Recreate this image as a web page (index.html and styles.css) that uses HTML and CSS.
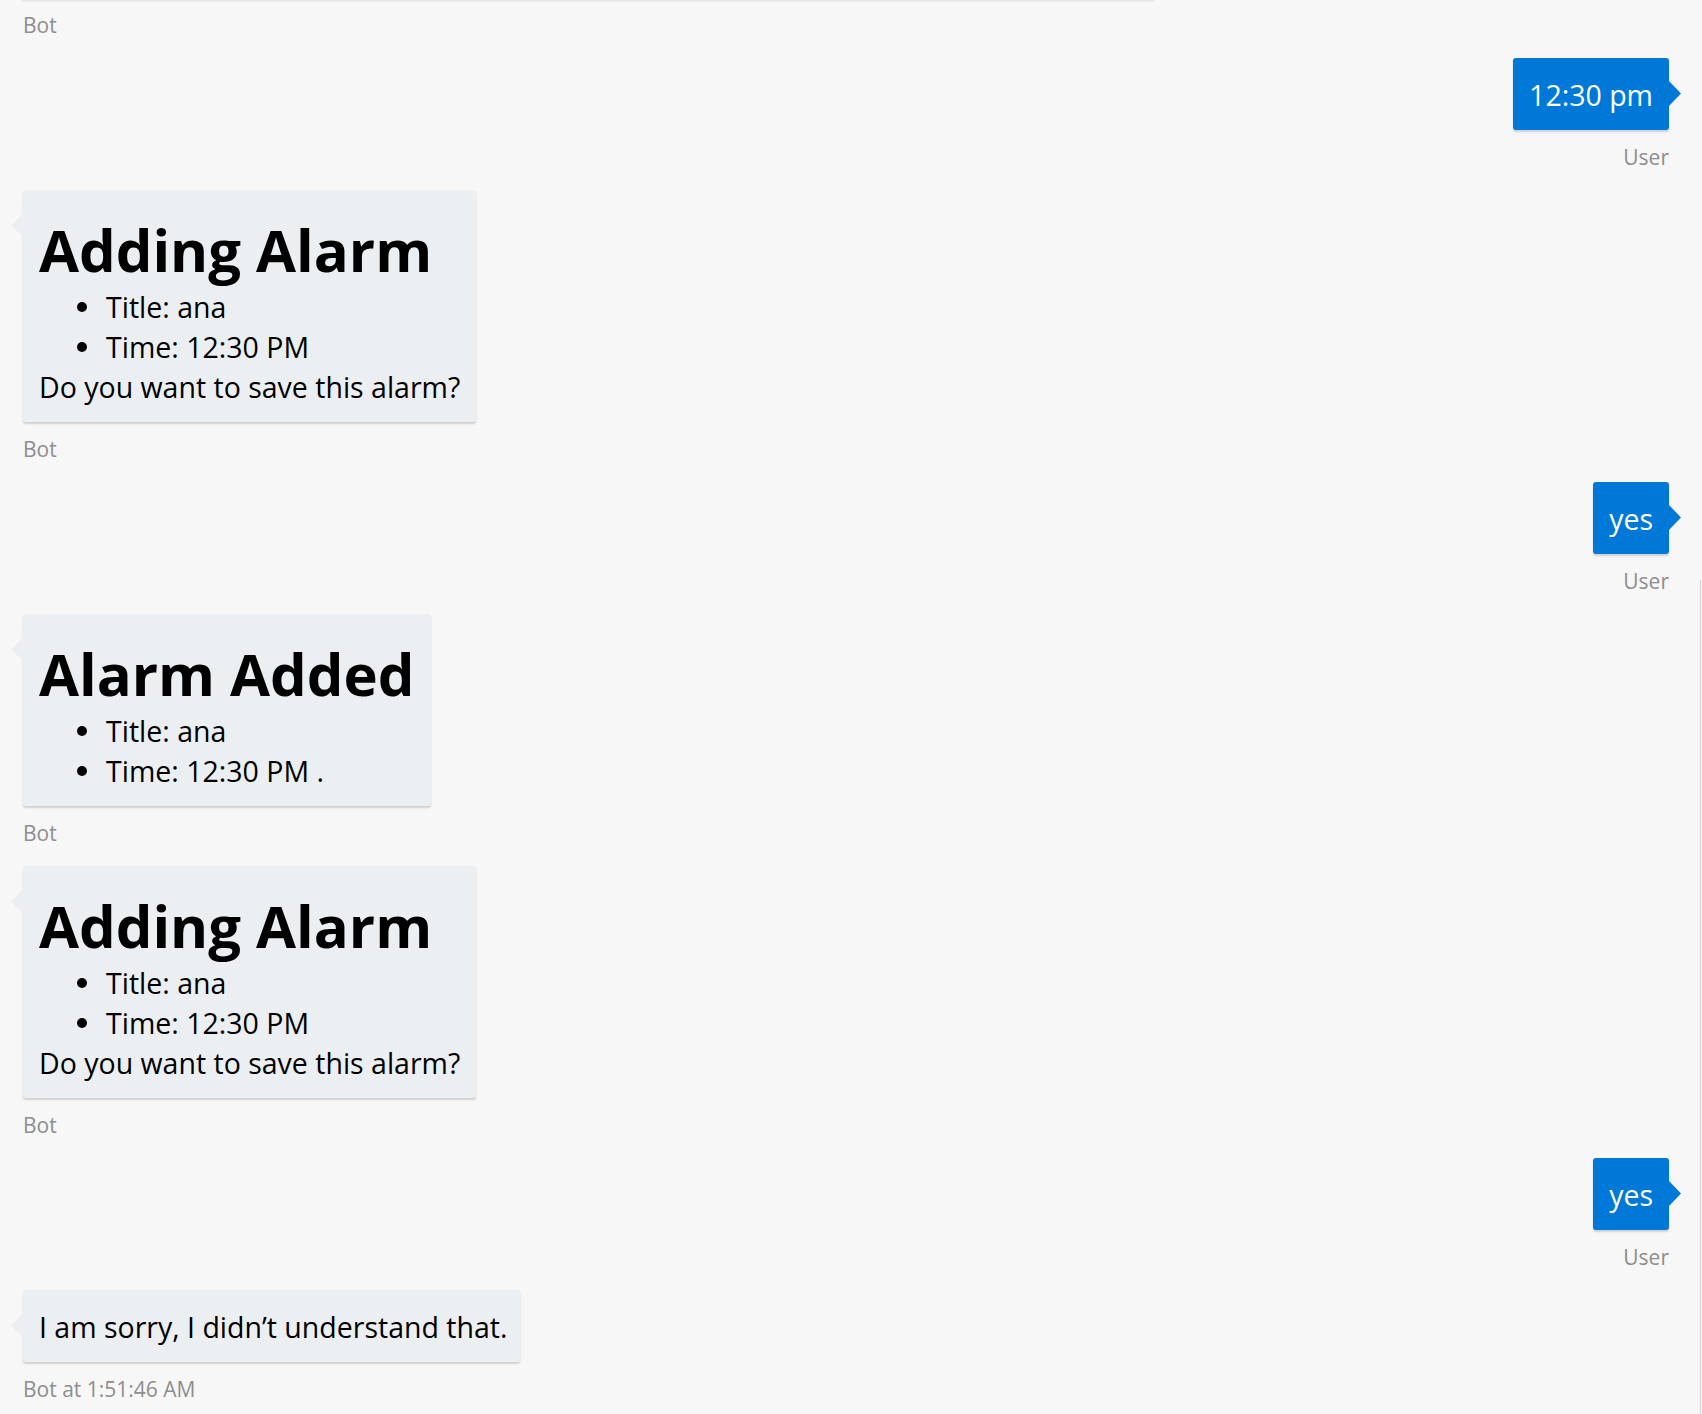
FILE: index.html
```html
<!DOCTYPE html>
<html lang="en">
<head>
<meta charset="utf-8">
<title>Chat</title>
<link rel="stylesheet" href="styles.css">
</head>
<body>
<div class="chat">
  <div class="prev-edge"></div>
  <div class="label first">Bot</div>

  <div class="msg me">
    <div class="bubble user">12:30 pm
      <svg class="callout right" width="12" height="25" viewBox="0 0 12 25"><polygon points="0,0 12,12.5 0,25" fill="#0078d7"/></svg>
    </div>
    <div class="label">User</div>
  </div>

  <div class="msg">
    <div class="bubble bot card">
      <svg class="callout left" width="12" height="24" viewBox="0 0 12 24"><polygon points="12,0 0,12.5 12,24" fill="#eceff1"/></svg>
      <h1>Adding Alarm</h1>
      <ul>
        <li>Title: ana</li>
        <li>Time: 12:30 PM</li>
      </ul>
      <p>Do you want to save this alarm?</p>
    </div>
    <div class="label">Bot</div>
  </div>

  <div class="msg me">
    <div class="bubble user">yes
      <svg class="callout right" width="12" height="25" viewBox="0 0 12 25"><polygon points="0,0 12,12.5 0,25" fill="#0078d7"/></svg>
    </div>
    <div class="label">User</div>
  </div>

  <div class="msg">
    <div class="bubble bot card">
      <svg class="callout left" width="12" height="24" viewBox="0 0 12 24"><polygon points="12,0 0,12.5 12,24" fill="#eceff1"/></svg>
      <h1>Alarm Added</h1>
      <ul>
        <li>Title: ana</li>
        <li>Time: 12:30 PM .</li>
      </ul>
    </div>
    <div class="label">Bot</div>
  </div>

  <div class="msg">
    <div class="bubble bot card">
      <svg class="callout left" width="12" height="24" viewBox="0 0 12 24"><polygon points="12,0 0,12.5 12,24" fill="#eceff1"/></svg>
      <h1>Adding Alarm</h1>
      <ul>
        <li>Title: ana</li>
        <li>Time: 12:30 PM</li>
      </ul>
      <p>Do you want to save this alarm?</p>
    </div>
    <div class="label">Bot</div>
  </div>

  <div class="msg me">
    <div class="bubble user">yes
      <svg class="callout right" width="12" height="25" viewBox="0 0 12 25"><polygon points="0,0 12,12.5 0,25" fill="#0078d7"/></svg>
    </div>
    <div class="label">User</div>
  </div>

  <div class="msg">
    <div class="bubble bot sorry">
      <svg class="callout left" width="12" height="24" viewBox="0 0 12 24"><polygon points="12,0 0,12.5 12,24" fill="#eceff1"/></svg>
      I am sorry, I didn’t understand that.
    </div>
    <div class="label">Bot at 1:51:46 AM</div>
  </div>
</div>
<div class="scroll-edge"></div>
</body>
</html>
```

FILE: styles.css
```css
html, body {
  margin: 0;
  padding: 0;
  background: #f7f7f7;
}

body {
  position: relative;
  min-height: 1414px;
  font-family: "Open Sans", "Noto Sans", sans-serif;
  color: #000;
}

.chat {
  padding: 0 33px 0 23px;
  display: flex;
  flex-direction: column;
}

.prev-edge {
  width: 1132px;
  height: 2px;
  margin-left: -1px;
  background: linear-gradient(#e2e2e2, #efefef);
}

.label {
  margin-top: 10px;
  padding-top: 3px;
  height: 27px;
  line-height: 29px;
  font-size: 21px;
  color: #8e8e8e;
  white-space: nowrap;
}

.label.first {
  margin-top: 6px;
  margin-bottom: 20px;
}

.msg {
  display: flex;
  flex-direction: column;
  align-items: flex-start;
  margin-bottom: 20px;
}

.msg.me {
  align-items: flex-end;
}

.bubble {
  position: relative;
  padding: 17px 16px 15px;
  border-radius: 3px;
  font-size: 28.5px;
  line-height: 40px;
  box-shadow: 0 2px 2px rgba(0, 0, 0, 0.16);
  white-space: nowrap;
}

.bubble.user {
  background: #0078d7;
  color: #fff;
}

.bubble.bot {
  background: #eceff1;
  color: #000;
}

.bubble.sorry {
  padding-right: 13px;
}

.callout {
  position: absolute;
  display: block;
}

.callout.left {
  left: -12px;
  top: 23px;
}

.callout.right {
  right: -12px;
  top: 23px;
}

.card h1 {
  margin: 0;
  padding-top: 5px;
  font-size: 58px;
  line-height: 75px;
  font-weight: 700;
}

.card ul {
  margin: 0;
  padding: 0 0 0 38px;
  list-style: none;
}

.card li {
  display: flex;
  align-items: flex-start;
}

.card li::before {
  content: "";
  flex: none;
  width: 10px;
  height: 10px;
  margin-top: 15px;
  margin-right: 19px;
  border-radius: 50%;
  background: #000;
}

.card p {
  margin: 0;
}

.scroll-edge {
  position: absolute;
  left: 1700px;
  top: 580px;
  bottom: 0;
  width: 1px;
  background: #d6d6d6;
}
```
